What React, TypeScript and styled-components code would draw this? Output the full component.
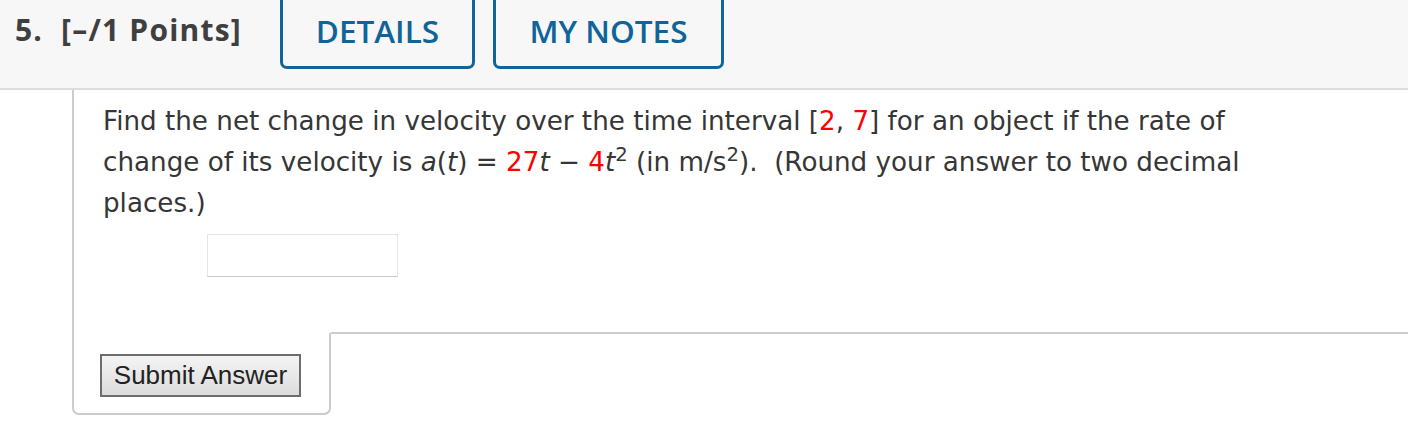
import styled, { createGlobalStyle } from 'styled-components';

const GlobalStyle = createGlobalStyle`
	html, body {
		margin: 0;
		padding: 0;
		background: #ffffff;
	}
	body {
		width: 1408px;
		height: 424px;
		overflow: hidden;
	}
`;

const Page = styled.div`
	display: flex;
	flex-direction: column;
	width: 1408px;
`;

const Header = styled.header`
	display: flex;
	align-items: flex-start;
	height: 88px;
	background: #f7f7f7;
	border-bottom: 2px solid #dddddd;
`;

const Title = styled.h2`
	margin: 0;
	padding: 10px 0 0 15px;
	width: 265px;
	font-family: 'Open Sans', sans-serif;
	font-weight: 700;
	font-size: 30px;
	letter-spacing: 1.2px;
	line-height: 40px;
	color: #3f3f3f;
	white-space: nowrap;
`;

const Tabs = styled.div`
	display: flex;
	gap: 18px;
`;

const Tab = styled.button<{ $width: number }>`
	box-sizing: border-box;
	width: ${(p) => p.$width}px;
	height: 69px;
	padding: 0 0 6px;
	background: transparent;
	border: 3px solid #0f6499;
	border-top: none;
	border-radius: 0 0 7px 7px;
	font-family: 'Open Sans', sans-serif;
	font-weight: 600;
	font-size: 31.5px;
	color: #0f6499;
	cursor: pointer;
`;

const Panel = styled.section`
	display: flex;
	flex-direction: column;
	margin-left: 72px;
`;

const Question = styled.div`
	border-left: 2px solid #cccccc;
	padding: 11px 0 56px 29px;
`;

const Prompt = styled.p`
	margin: 0;
	width: 1160px;
	font-family: 'DejaVu Sans', Verdana, sans-serif;
	font-size: 26.2px;
	line-height: 41px;
	color: #363636;
`;

const Red = styled.span`
	color: #ff0000;
`;

const Var = styled.i`
	font-style: italic;
`;

const Sup = styled.sup`
	font-size: 0.75em;
	line-height: 0;
	vertical-align: 0.5em;
`;

const AnswerBox = styled.input`
	box-sizing: border-box;
	display: block;
	width: 191px;
	height: 43px;
	margin: 10px 0 0 104px;
	border: 1px solid #e6e6e6;
	border-bottom-color: #c8c8c8;
	background: #ffffff;
	outline: none;
`;

const Footer = styled.div`
	display: flex;
`;

const SubmitCell = styled.div`
	box-sizing: border-box;
	width: 259px;
	height: 82px;
	padding: 21px 0 0 26px;
	border: 2px solid #cccccc;
	border-top: none;
	border-radius: 0 0 7px 7px;
`;

const Rest = styled.div`
	flex: 1;
	border-top: 2px solid #cccccc;
	margin-top: -1px;
	height: 0;
`;

const SubmitButton = styled.button`
	box-sizing: border-box;
	width: 201px;
	height: 43px;
	padding: 0;
	border: 2px solid #6d6d6d;
	background: linear-gradient(#f4f4f4, #dcdcdc);
	font-family: 'Liberation Sans', Arial, sans-serif;
	font-size: 26px;
	color: #222222;
	cursor: pointer;
`;

export default function App() {
	return (
		<Page>
			<GlobalStyle />
			<Header>
				<Title>5.&nbsp; [–/1 Points]</Title>
				<Tabs>
					<Tab $width={195}>DETAILS</Tab>
					<Tab $width={231}>MY NOTES</Tab>
				</Tabs>
			</Header>
			<Panel>
				<Question>
					<Prompt>
						Find the net change in velocity over the time interval [<Red>2</Red>, <Red>7</Red>] for an object if the rate of
						change of its velocity is <Var>a</Var>(<Var>t</Var>) = <Red>27</Red><Var>t</Var> − <Red>4</Red>
						<Var>t</Var>
						<Sup>2</Sup> (in m/s<Sup>2</Sup>).&nbsp; (Round your answer to two decimal places.)
					</Prompt>
					<AnswerBox type="text" />
				</Question>
				<Footer>
					<SubmitCell>
						<SubmitButton>Submit Answer</SubmitButton>
					</SubmitCell>
					<Rest />
				</Footer>
			</Panel>
		</Page>
	);
}
